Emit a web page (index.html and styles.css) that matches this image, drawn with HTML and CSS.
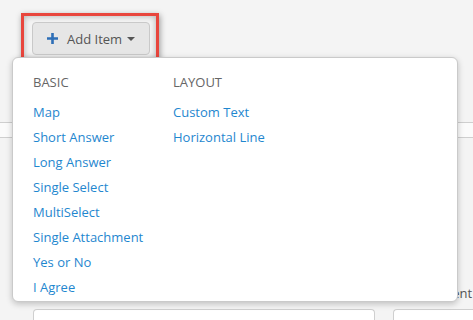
FILE: index.html
```html
<!DOCTYPE html>
<html>
    <head>
        <meta charset="utf-8">
        <title>Add Item</title>
        <link rel="stylesheet" href="styles.css">
    </head>
    <body>
        <div class="page">
            <div class="toolbar">
                <div class="highlight">
                    <button class="add-button">
                        <svg class="plus" width="11" height="11" viewBox="0 0 11 11"><path d="M5.5 0v11M0 5.5h11" stroke="#2e6fb7" stroke-width="2.6"/></svg>
                        <span class="add-label">Add Item</span>
                        <span class="caret"></span>
                    </button>
                </div>
            </div>
            <div class="band"></div>
            <div class="fields">
                <div class="field">
                    <div class="field-label"></div>
                    <div class="field-box"></div>
                </div>
                <div class="field field-right">
                    <div class="field-label">Requirement</div>
                    <div class="field-box"></div>
                </div>
            </div>
        </div>
        <div class="dropdown">
            <div class="column">
                <div class="heading">Basic</div>
                <ul>
                    <li><a href="#">Map</a></li>
                    <li><a href="#">Short Answer</a></li>
                    <li><a href="#">Long Answer</a></li>
                    <li><a href="#">Single Select</a></li>
                    <li><a href="#">MultiSelect</a></li>
                    <li><a href="#">Single Attachment</a></li>
                    <li><a href="#">Yes or No</a></li>
                    <li><a href="#">I Agree</a></li>
                </ul>
            </div>
            <div class="column">
                <div class="heading">Layout</div>
                <ul>
                    <li><a href="#">Custom Text</a></li>
                    <li><a href="#">Horizontal Line</a></li>
                </ul>
            </div>
        </div>
    </body>
</html>
```
FILE: styles.css
```css
html, body {
    margin: 0;
    height: 100%;
    overflow: hidden;
}
body {
    background: #f4f4f4;
    font-family: "Open Sans", "Liberation Sans", sans-serif;
    font-size: 13px;
    color: #555;
}
.page {
    height: 320px;
    overflow: hidden;
}
.toolbar {
    height: 122px;
    padding-left: 21px;
    padding-top: 13px;
    box-sizing: border-box;
}
.highlight {
    display: inline-block;
    border: 3px solid #e8453c;
    padding: 6px 6px 4px 8px;
    box-shadow: 1px 2px 6px rgba(0, 0, 0, 0.38), inset 0 0 6px rgba(0, 0, 0, 0.3);
}
.add-button {
    display: flex;
    align-items: center;
    width: 118px;
    height: 33px;
    padding: 0 0 0 14px;
    border: 1px solid #c9c9c9;
    border-radius: 4px;
    background: #e6e6e6;
    font-family: inherit;
    font-size: 13px;
    color: #555;
}
.plus {
    margin-right: 9px;
}
.caret {
    margin-left: 5px;
    width: 0;
    height: 0;
    border-left: 4px solid transparent;
    border-right: 4px solid transparent;
    border-top: 4px solid #555;
}
.band {
    height: 14px;
    background: #fbfbfb;
    border-top: 1px solid #cfcfcf;
    border-bottom: 1px solid #cfcfcf;
}
.fields {
    display: flex;
    gap: 18px;
    padding-left: 33px;
    margin-top: 146px;
}
.field {
    width: 342px;
    flex: none;
}
.field-right {
    flex: 1;
    width: auto;
    min-width: 0;
}
.field-label {
    height: 25px;
    line-height: 18px;
    white-space: nowrap;
}
.field-box {
    height: 12px;
    background: #fff;
    border: 1px solid #cfcfcf;
    border-bottom: none;
    border-radius: 4px 4px 0 0;
}
.field-right .field-box {
    border-right: none;
    border-radius: 4px 0 0 0;
}
.dropdown {
    position: absolute;
    top: 57px;
    left: 12px;
    width: 446px;
    height: 245px;
    box-sizing: border-box;
    padding: 12px 20px 0;
    display: flex;
    background: #fff;
    border: 1px solid #cacaca;
    border-radius: 6px;
    box-shadow: 0 2px 6px rgba(0, 0, 0, 0.22);
}
.column {
    width: 140px;
}
.heading {
    line-height: 25px;
    margin-bottom: 5px;
    text-transform: uppercase;
    color: #666;
}
.column ul {
    list-style: none;
    margin: 0;
    padding: 0;
}
.column li {
    line-height: 25px;
}
.column a {
    color: #1f87cf;
    text-decoration: none;
}
```
